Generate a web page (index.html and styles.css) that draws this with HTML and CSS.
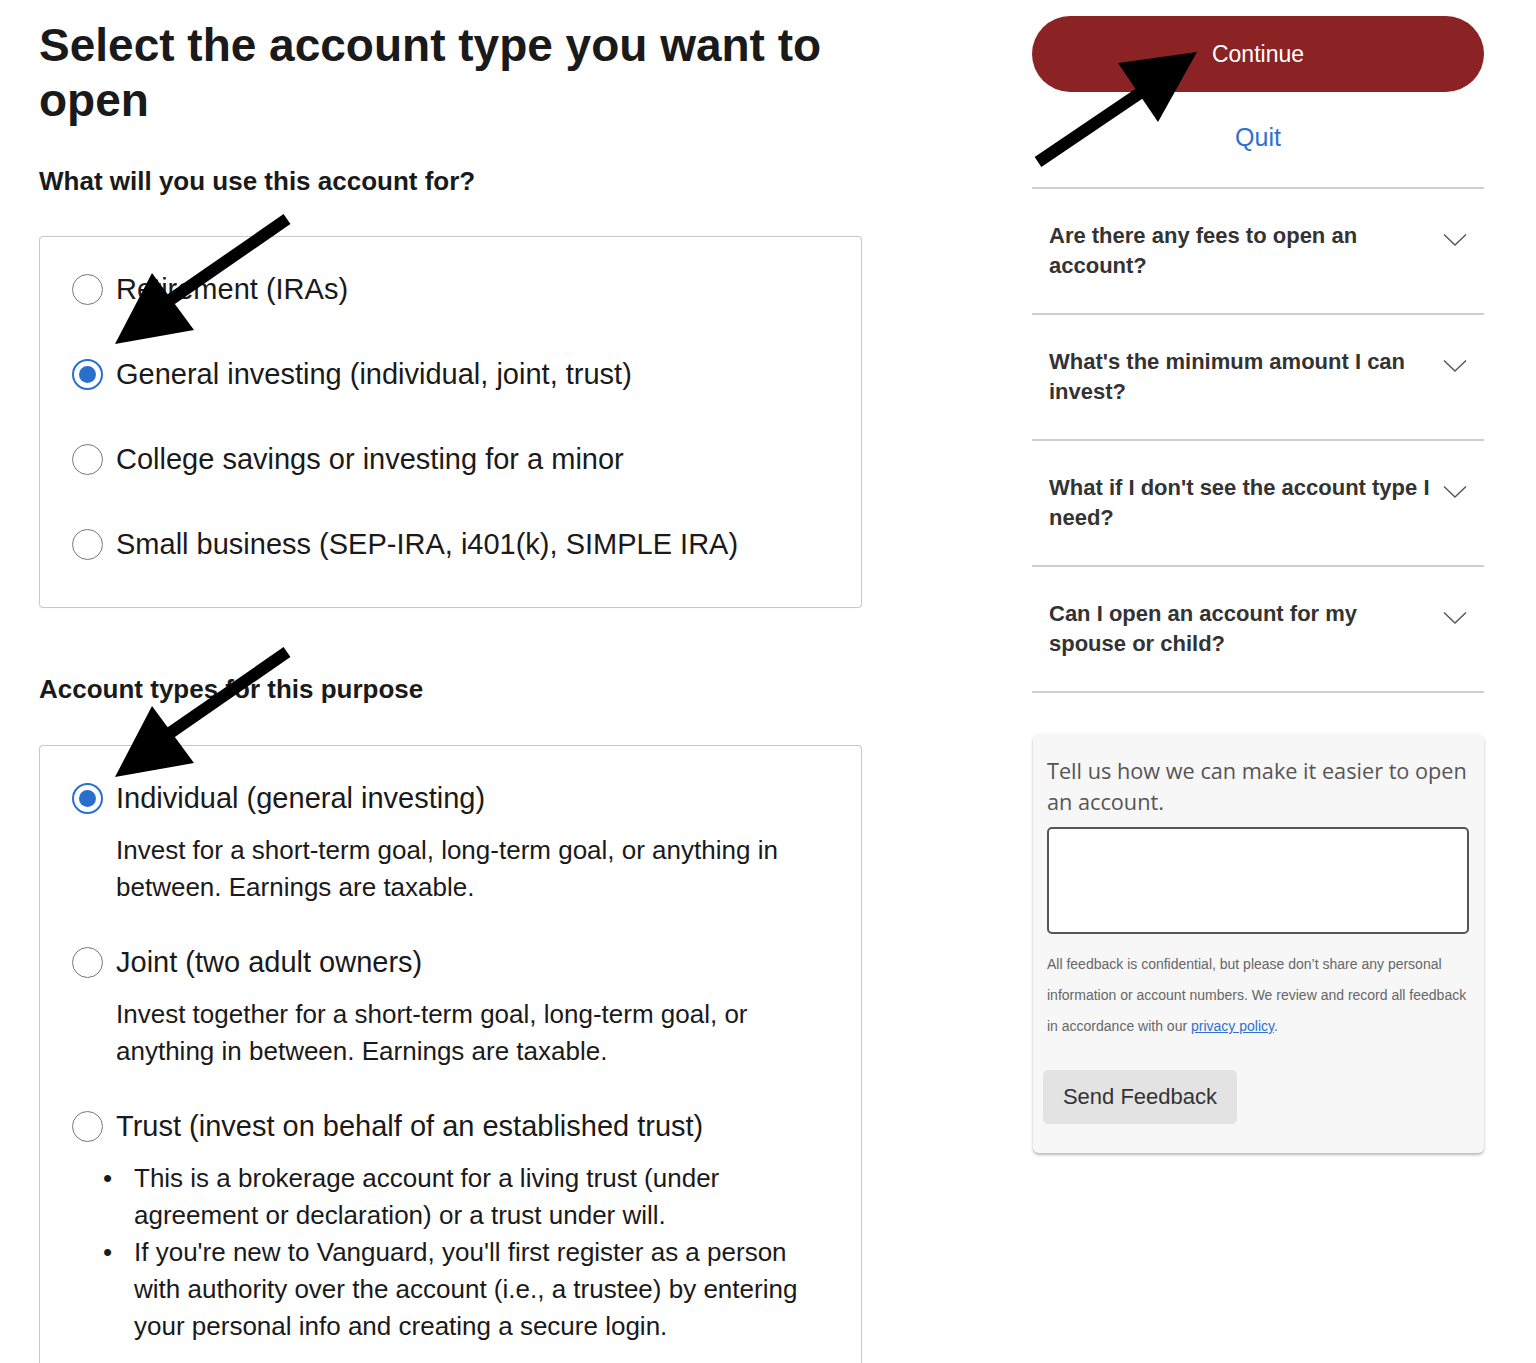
FILE: index.html
```html
<!DOCTYPE html>
<html lang="en">
<head>
<meta charset="utf-8">
<title>Select the account type</title>
<link rel="stylesheet" href="styles.css">
</head>
<body>
<div class="page">
  <main class="main">
    <h1 class="title">Select the account type you want to open</h1>

    <h2 class="section-title">What will you use this account for?</h2>
    <div class="card card-purpose">
      <label class="option"><span class="radio"></span><span class="option-label">Retirement (IRAs)</span></label>
      <label class="option"><span class="radio radio-on"></span><span class="option-label">General investing (individual, joint, trust)</span></label>
      <label class="option"><span class="radio"></span><span class="option-label">College savings or investing for a minor</span></label>
      <label class="option"><span class="radio"></span><span class="option-label">Small business (SEP-IRA, i401(k), SIMPLE IRA)</span></label>
    </div>

    <h2 class="section-title section-title-2">Account types for this purpose</h2>
    <div class="card card-types">
      <div class="type">
        <label class="option"><span class="radio radio-on"></span><span class="option-label">Individual (general investing)</span></label>
        <p class="type-desc">Invest for a short-term goal, long-term goal, or anything in between. Earnings are taxable.</p>
      </div>
      <div class="type">
        <label class="option"><span class="radio"></span><span class="option-label">Joint (two adult owners)</span></label>
        <p class="type-desc">Invest together for a short-term goal, long-term goal, or anything in between. Earnings are taxable.</p>
      </div>
      <div class="type">
        <label class="option"><span class="radio"></span><span class="option-label">Trust (invest on behalf of an established trust)</span></label>
        <ul class="type-list">
          <li><span>This is a brokerage account for a living trust (under agreement or declaration) or a trust under will.</span></li>
          <li><span>If you're new to Vanguard, you'll first register as a person with authority over the account (i.e., a trustee) by entering your personal info and creating a secure login.</span></li>
        </ul>
      </div>
    </div>
  </main>

  <aside class="side">
    <button class="btn-continue" type="button">Continue</button>
    <a class="quit" href="#">Quit</a>

    <ul class="faq">
      <li class="faq-item"><span class="faq-q">Are there any fees to open an account?</span><svg class="chev" viewBox="0 0 24 14" width="24" height="14"><path d="M1 1.5 L12 12 L23 1.5" fill="none" stroke="#555" stroke-width="1.4"/></svg></li>
      <li class="faq-item"><span class="faq-q">What's the minimum amount I can invest?</span><svg class="chev" viewBox="0 0 24 14" width="24" height="14"><path d="M1 1.5 L12 12 L23 1.5" fill="none" stroke="#555" stroke-width="1.4"/></svg></li>
      <li class="faq-item"><span class="faq-q">What if I don't see the account type I need?</span><svg class="chev" viewBox="0 0 24 14" width="24" height="14"><path d="M1 1.5 L12 12 L23 1.5" fill="none" stroke="#555" stroke-width="1.4"/></svg></li>
      <li class="faq-item"><span class="faq-q">Can I open an account for my spouse or child?</span><svg class="chev" viewBox="0 0 24 14" width="24" height="14"><path d="M1 1.5 L12 12 L23 1.5" fill="none" stroke="#555" stroke-width="1.4"/></svg></li>
    </ul>

    <div class="feedback">
      <p class="fb-title">Tell us how we can make it easier to open an account.</p>
      <textarea class="fb-input" aria-label="Feedback"></textarea>
      <p class="fb-note">All feedback is confidential, but please don’t share any personal information or account numbers. We review and record all feedback in accordance with our <a href="#">privacy policy</a>.</p>
      <button class="fb-btn" type="button">Send Feedback</button>
    </div>
  </aside>

  <svg class="annotations" width="1536" height="1363" viewBox="0 0 1536 1363" aria-hidden="true">
    <g fill="#000" stroke="#000">
      <line x1="287" y1="219" x2="170" y2="300" stroke-width="12"/>
      <polygon points="115,344 152,273 194,330" stroke="none"/>
      <line x1="287" y1="652" x2="170" y2="733" stroke-width="12"/>
      <polygon points="115,777 152,706 194,763" stroke="none"/>
      <line x1="1038" y1="162" x2="1140" y2="93" stroke-width="12"/>
      <polygon points="1197,52 1118,63 1158,122" stroke="none"/>
    </g>
  </svg>
</div>
</body>
</html>
```

FILE: styles.css
```css
* { box-sizing: border-box; }

html, body {
  margin: 0;
  padding: 0;
  background: #fff;
}

body {
  font-family: "Liberation Sans", Arial, sans-serif;
  color: #1a1a1a;
}

.page {
  position: relative;
  display: flex;
  align-items: flex-start;
  width: 1536px;
  height: 1363px;
  overflow: hidden;
  padding-left: 39px;
}

.main {
  width: 823px;
  padding-top: 18px;
}

.title {
  margin: 0;
  font-size: 46px;
  line-height: 55px;
  font-weight: 700;
  color: #1a1a1a;
}

.section-title {
  margin: 38px 0 40px;
  font-size: 26px;
  line-height: 30px;
  font-weight: 700;
  color: #1a1a1a;
}

.section-title-2 {
  margin-top: 66px;
  margin-bottom: 41px;
}

.card {
  border: 1px solid #c8c8c8;
  border-radius: 4px;
  background: #fff;
  box-shadow: 0 0 1px rgba(0,0,0,0.15);
}

.card-purpose {
  display: flex;
  flex-direction: column;
  gap: 45px;
  padding: 32px 32px 43px;
}

.option {
  display: flex;
  align-items: center;
  gap: 13px;
  height: 40px;
}

.radio {
  flex: none;
  width: 31px;
  height: 31px;
  border-radius: 50%;
  border: 1.5px solid #777;
  background: #fff;
  display: flex;
  align-items: center;
  justify-content: center;
}

.radio-on {
  border: 2px solid #2b6fcd;
}

.radio-on::after {
  content: "";
  width: 17px;
  height: 17px;
  border-radius: 50%;
  background: #2b6fcd;
}

.option-label {
  font-size: 29px;
  color: #1a1a1a;
  white-space: nowrap;
}

.card-types {
  display: flex;
  flex-direction: column;
  gap: 36px;
  padding: 32px 32px 60px;
}

.type-desc {
  margin: 14px 0 0 44px;
  font-size: 26px;
  line-height: 37px;
  color: #1a1a1a;
}

.type-list {
  list-style: none;
  margin: 14px 0 0 31px;
  padding: 0;
  font-size: 26px;
  line-height: 37px;
  color: #1a1a1a;
}

.type-list li {
  display: flex;
}

.type-list li::before {
  content: "\2022";
  flex: none;
  width: 31px;
}

/* Right column */
.side {
  width: 452px;
  margin-left: 170px;
  padding-top: 16px;
  display: flex;
  flex-direction: column;
}

.btn-continue {
  height: 76px;
  border: none;
  border-radius: 38px;
  background: #8b2324;
  color: #fff;
  font-family: "Liberation Sans", Arial, sans-serif;
  font-size: 23px;
  font-weight: 400;
  cursor: pointer;
}

.quit {
  display: block;
  margin: 30px 0 35px;
  text-align: center;
  font-size: 25px;
  line-height: 30px;
  color: #2d72d2;
  text-decoration: none;
}

.faq {
  list-style: none;
  margin: 0;
  padding: 0;
  border-top: 2px solid #cfcfcf;
}

.faq-item {
  display: flex;
  justify-content: space-between;
  align-items: flex-start;
  padding: 32px 17px 32px 17px;
  border-bottom: 2px solid #cfcfcf;
}

.faq-q {
  width: 386px;
  font-size: 22px;
  line-height: 30px;
  font-weight: 700;
  color: #333;
  min-height: 60px;
}

.chev {
  flex: none;
  margin-top: 12px;
}

.feedback {
  margin-top: 41px;
  margin-left: 1px;
  width: 451px;
  padding: 21px 15px 29px 14px;
  background: #f7f7f7;
  border-radius: 6px;
  box-shadow: 0 2px 3px rgba(0,0,0,0.28);
}

.fb-title {
  margin: 0;
  font-family: "Open Sans", sans-serif;
  font-size: 21.7px;
  line-height: 31px;
  color: #555;
}

.fb-input {
  display: block;
  width: 422px;
  height: 107px;
  margin-top: 10px;
  border: 2px solid #555;
  border-radius: 5px;
  background: #fff;
  resize: none;
}

.fb-note {
  margin: 15px 0 0;
  font-size: 14px;
  line-height: 31px;
  color: #666;
}

.fb-note a {
  color: #2d72d2;
  text-underline-offset: 1px;
}

.fb-btn {
  margin-top: 28px;
  margin-left: -4px;
  width: 194px;
  height: 54px;
  border: none;
  border-radius: 5px;
  background: #e3e3e3;
  color: #333;
  font-family: "Liberation Sans", Arial, sans-serif;
  font-size: 22px;
}

.annotations {
  position: absolute;
  top: 0;
  left: 0;
  pointer-events: none;
}
```
